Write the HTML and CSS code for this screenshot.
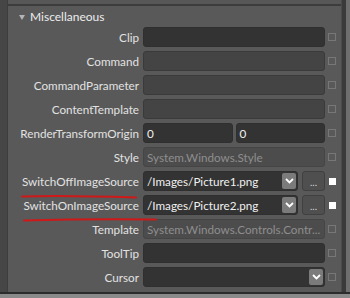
FILE: index.html
```html
<!DOCTYPE html>
<html>
<head>
<meta charset="utf-8">
<link rel="stylesheet" href="styles.css">
</head>
<body>
<div class="frame">
  <div class="leftstrip"></div>
  <div class="panel">
    <div class="topband"></div>
    <div class="header"><span class="tri"></span><span class="title">Miscellaneous</span></div>
    <div class="rows">
      <div class="row"><div class="label">Clip</div><div class="field dark"></div><div class="mark"></div></div>
      <div class="row"><div class="label">Command</div><div class="field"></div><div class="mark"></div></div>
      <div class="row"><div class="label">CommandParameter</div><div class="field"></div><div class="mark"></div></div>
      <div class="row"><div class="label">ContentTemplate</div><div class="field"></div><div class="mark"></div></div>
      <div class="row"><div class="label">RenderTransformOrigin</div><div class="pair"><div class="field dark val">0</div><div class="field dark val">0</div></div><div class="mark"></div></div>
      <div class="row"><div class="label">Style</div><div class="field ro">System.Windows.Style</div><div class="mark"></div></div>
      <div class="row"><div class="label">SwitchOffImageSource</div><div class="combo"><div class="field dark val cfield">/Images/Picture1.png<span class="dd"><svg width="9" height="6" viewBox="0 0 9 6"><path d="M1 1 L4.5 4.5 L8 1" fill="none" stroke="#fff" stroke-width="1.8"/></svg></span></div><div class="dots">...</div></div><div class="mark set"></div></div>
      <div class="row"><div class="label">SwitchOnImageSource</div><div class="combo"><div class="field dark val cfield">/Images/Picture2.png<span class="dd"><svg width="9" height="6" viewBox="0 0 9 6"><path d="M1 1 L4.5 4.5 L8 1" fill="none" stroke="#fff" stroke-width="1.8"/></svg></span></div><div class="dots">...</div></div><div class="mark set"></div></div>
      <div class="row"><div class="label">Template</div><div class="field ro">System.Windows.Controls.Contr...</div><div class="mark"></div></div>
      <div class="row"><div class="label">ToolTip</div><div class="field dark"></div><div class="mark"></div></div>
      <div class="row"><div class="label">Cursor</div><div class="field dark cfield"><span class="dd"><svg width="9" height="6" viewBox="0 0 9 6"><path d="M1 1 L4.5 4.5 L8 1" fill="none" stroke="#fff" stroke-width="1.8"/></svg></span></div><div class="mark"></div></div>
    </div>
    <svg class="ink" width="350" height="298" viewBox="0 0 350 298">
      <path d="M22 196.5 C50 195.5 90 196 136 197.5" fill="none" stroke="#d01818" stroke-width="2" stroke-linecap="round"/>
      <path d="M24 220.5 C60 219.5 110 219 156 219.5" fill="none" stroke="#d01818" stroke-width="2" stroke-linecap="round"/>
    </svg>
  </div>
  <div class="rightstrip"></div>
</div>
<div class="bottom"></div>
</body>
</html>
```
FILE: styles.css
```css
html, body {
  margin: 0;
  padding: 0;
  background: #8a8a8a;
  width: 350px;
  height: 298px;
  overflow: hidden;
  font-family: "Lato", "Noto Sans", sans-serif;
}
.frame {
  display: flex;
  height: 292px;
  background: #585858;
}
.leftstrip {
  width: 7px;
  background: #464646;
  border-right: 1px solid #3e3e3e;
}
.rightstrip {
  width: 4px;
  background: #3a3a3a;
  border-left: 1px solid #4a4a4a;
}
.panel {
  position: relative;
  width: 333px;
  background: #595959;
}
.frame::after {
  content: "";
  width: 4px;
  background: #6e6e6e;
}
.topband {
  height: 4px;
  background: #575757;
  border-bottom: 2px solid #3c3c3c;
}
.header {
  height: 21px;
  display: flex;
  align-items: center;
  padding-left: 11px;
  color: #ececec;
  font-size: 12px;
}
.tri {
  width: 0;
  height: 0;
  border-left: 3px solid transparent;
  border-right: 3px solid transparent;
  border-top: 5px solid #b4b4b4;
  margin-right: 5px;
  margin-top: 1px;
}
.rows {
  display: flex;
  flex-direction: column;
  gap: 4px;
}
.row {
  display: flex;
  align-items: center;
  height: 20px;
}
.label {
  width: 131px;
  text-align: right;
  color: #e2e2e2;
  font-size: 11.7px;
  white-space: nowrap;
  margin-right: 4px;
}
.field {
  box-sizing: border-box;
  width: 182px;
  height: 20px;
  border-radius: 3px;
  background: #444444;
  border: 1px solid #3a3a3a;
  color: #f0f0f0;
  font-size: 11.7px;
  line-height: 18px;
  padding-left: 3px;
  white-space: nowrap;
  overflow: hidden;
}
.field.dark {
  background: #333333;
  border-color: #2f2f2f;
}
.field.ro {
  background: #4c4c4c;
  border-color: #454545;
  color: #8e8e8e;
}
.pair {
  display: flex;
  gap: 3px;
  width: 182px;
}
.pair .field { flex: 1; }
.combo {
  display: flex;
  width: 182px;
  gap: 4px;
}
.cfield {
  position: relative;
}
.combo .cfield { width: 155px; }
.dd {
  position: absolute;
  right: 1px;
  top: 1px;
  width: 14px;
  height: 16px;
  border-radius: 2px;
  background: #7b7b7b;
  display: flex;
  align-items: center;
  justify-content: center;
}
.dots {
  box-sizing: border-box;
  width: 23px;
  height: 20px;
  border-radius: 3px;
  background: #4f4f4f;
  border: 1px solid #404040;
  color: #d8d8d8;
  font-size: 10px;
  line-height: 20px;
  text-align: center;
}
.mark {
  box-sizing: border-box;
  width: 8px;
  height: 8px;
  margin-left: 3px;
  border: 1px solid #777;
}
.mark.set {
  background: #ffffff;
  border-color: #ffffff;
  width: 7px;
  height: 7px;
  margin-left: 4px;
}
.ink {
  position: absolute;
  left: -8px;
  top: 0;
  pointer-events: none;
}
.bottom {
  height: 2px;
  background: #2c2c2c;
}
```
